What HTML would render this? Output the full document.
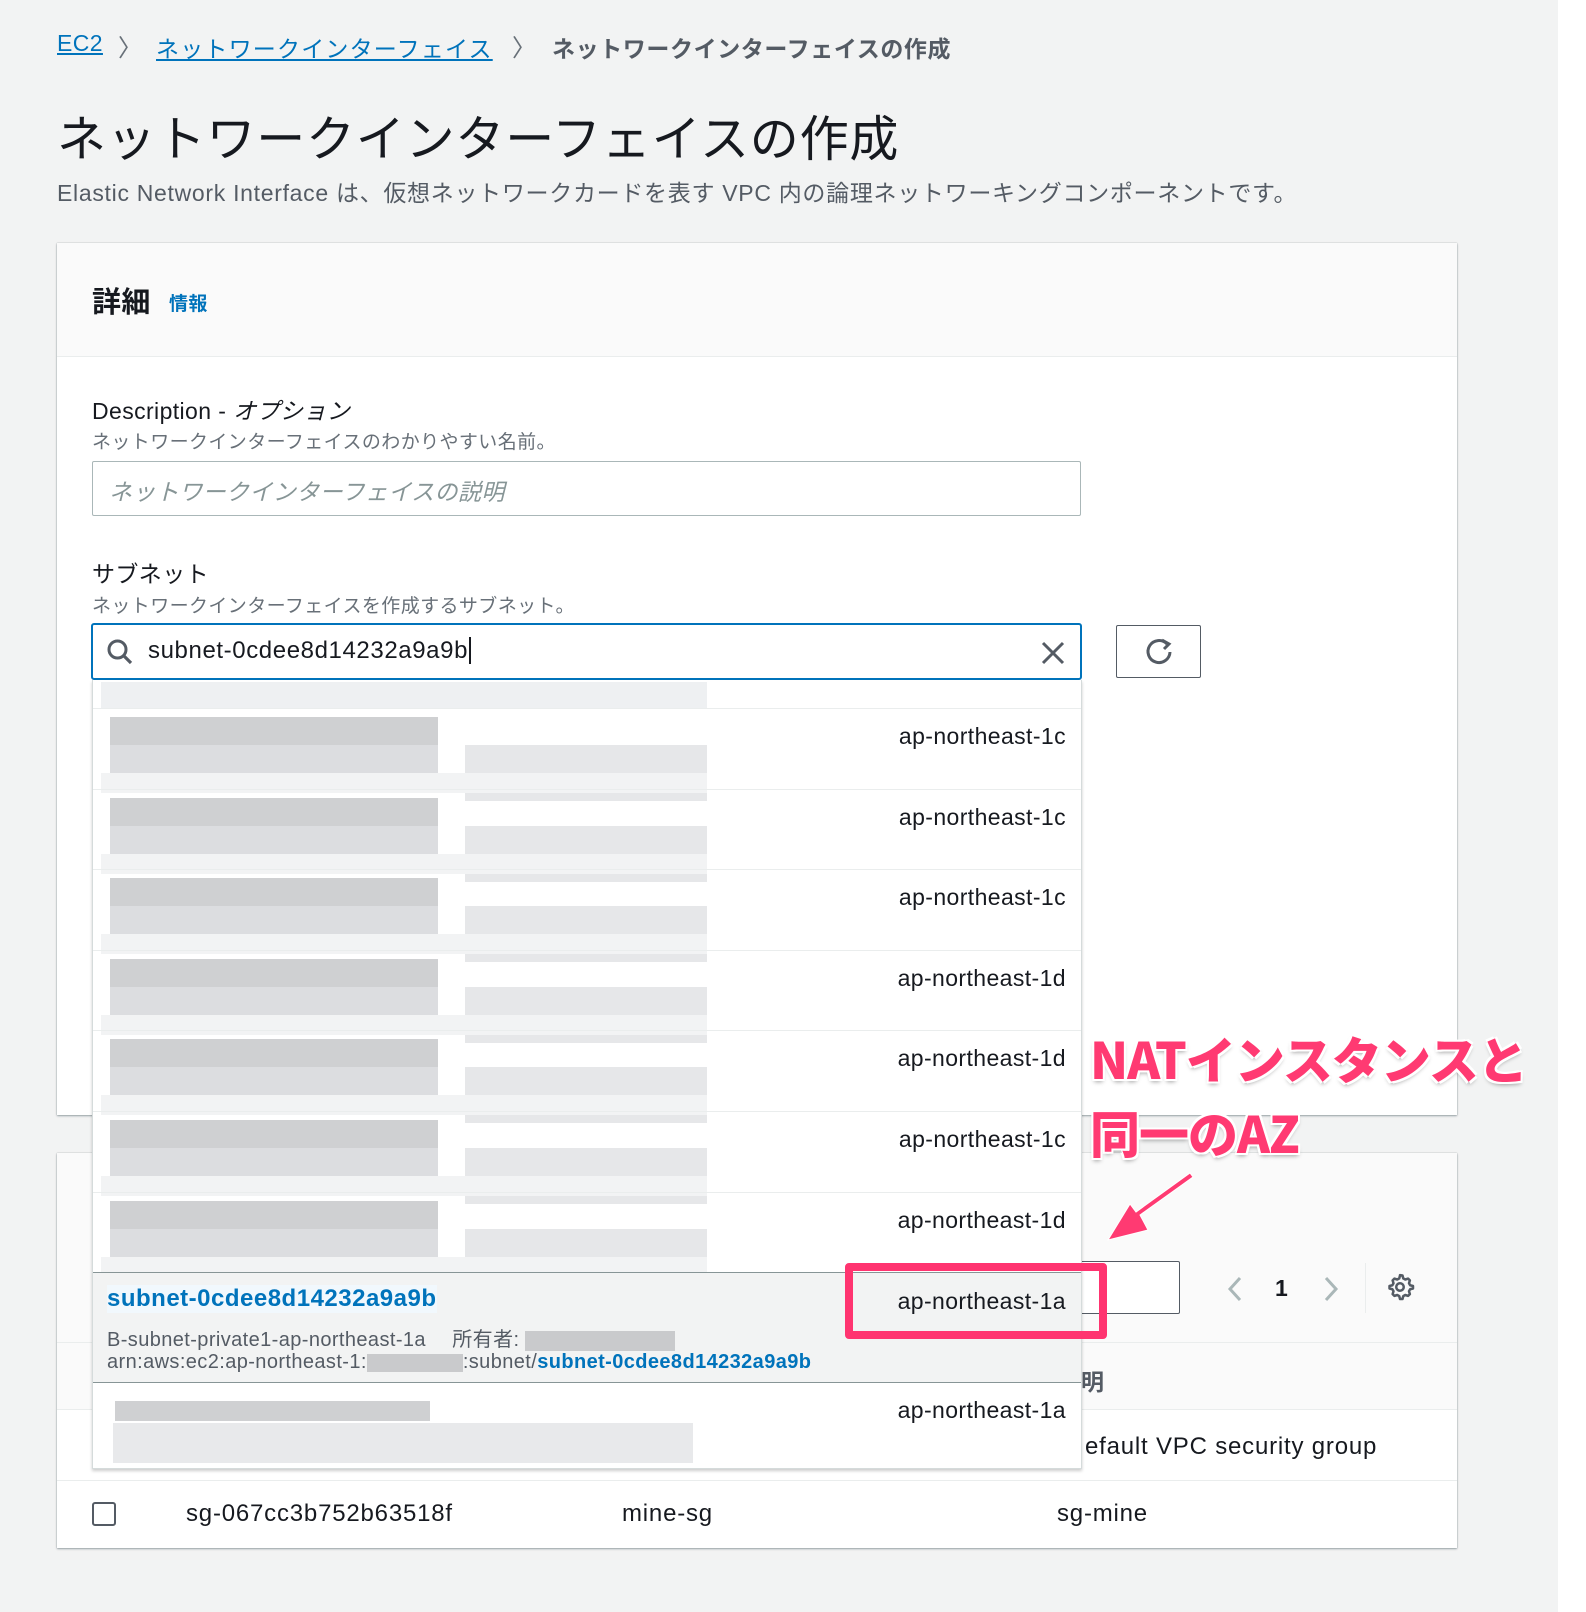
<!DOCTYPE html>
<html><head><meta charset="utf-8"><style>
*{margin:0;padding:0;box-sizing:border-box}
body{width:1586px;height:1612px;background:#fff;font-family:"Liberation Sans","Noto Sans CJK JP",sans-serif;color:#16191f;position:relative;overflow:hidden;letter-spacing:0.4px}
.bg{position:absolute;left:0;top:0;width:1558px;height:1612px;background:#f2f3f3}
.a{position:absolute;white-space:nowrap}
.panel{position:absolute;background:#fff;box-shadow:0 1px 2px rgba(0,28,36,.35),0 0 1px rgba(0,28,36,.3)}
.row{position:absolute;left:0;width:989px;height:81px;border-top:1px solid #eaeded}
.b1{position:absolute;left:17px;width:328px;height:28px;background:#cfd0d2}
.b2{position:absolute;left:17px;width:328px;height:28px;background:#dcdde0}
.b3{position:absolute;left:372px;width:242px;height:56px;background:#e6e7e9}
.b4{position:absolute;left:8px;width:606px;height:20px;background:#f2f3f4}
.az{position:absolute;right:16px;font-size:23px;color:#16191f}
.ann{position:absolute;font-family:"Noto Sans CJK JP",sans-serif;font-weight:900;color:#ff3a72;font-size:50px;text-shadow:2px 2px 0 #fff,-2px -2px 0 #fff,2px -2px 0 #fff,-2px 2px 0 #fff,0 3px 4px rgba(0,0,0,.35);white-space:nowrap;letter-spacing:-1px}
</style></head><body>
<div class="bg"></div>
<div class="a" style="left:57px;top:30px;font-size:23px;color:#0073bb;text-decoration:underline">EC2</div>
<div class="a" style="left:118px;top:28px;font-size:24px;color:#687078">〉</div>
<div class="a" style="left:156px;top:30px;font-size:23px;color:#0073bb;text-decoration:underline;letter-spacing:1.2px">ネットワークインターフェイス</div>
<div class="a" style="left:512px;top:28px;font-size:24px;color:#687078">〉</div>
<div class="a" style="left:552px;top:30px;font-size:23px;color:#545b64;font-weight:bold;letter-spacing:0.6px">ネットワークインターフェイスの作成</div>
<div class="a" style="left:57px;top:100px;font-size:49px;color:#16191f;letter-spacing:0.8px">ネットワークインターフェイスの作成</div>
<div class="a" style="left:57px;top:174px;font-size:23px;color:#545b64;letter-spacing:0.7px">Elastic Network Interface は、仮想ネットワークカードを表す VPC 内の論理ネットワーキングコンポーネントです。</div>

<div class="panel" style="left:57px;top:243px;width:1400px;height:872px">
 <div style="height:114px;background:#fafafa;border-bottom:1px solid #eaeded"></div>
 <div class="a" style="left:35px;top:36px;font-size:29px;font-weight:bold">詳細</div>
 <div class="a" style="left:112px;top:46px;font-size:19px;font-weight:bold;color:#0073bb">情報</div>
 <div class="a" style="left:35px;top:149px;font-size:23px">Description - <i>オプション</i></div>
 <div class="a" style="left:35px;top:184px;font-size:19px;color:#687078">ネットワークインターフェイスのわかりやすい名前。</div>
 <div style="position:absolute;left:35px;top:218px;width:989px;height:55px;border:1px solid #aab7b8;border-radius:2px"></div>
 <div class="a" style="left:52px;top:230px;font-size:23px;color:#879596;font-style:italic">ネットワークインターフェイスの説明</div>
 <div class="a" style="left:35px;top:312px;font-size:23px">サブネット</div>
 <div class="a" style="left:35px;top:348px;font-size:19px;color:#687078">ネットワークインターフェイスを作成するサブネット。</div>
 <div style="position:absolute;left:1059px;top:382px;width:85px;height:53px;border:1px solid #545b64;border-radius:2px"></div>
 <svg style="position:absolute;left:1086px;top:394px" width="32" height="30" viewBox="0 0 32 30"><path d="M24 7 A11 11 0 1 0 27 15" fill="none" stroke="#545b64" stroke-width="3"/><path d="M19 3 L26 7 L21 12" fill="none" stroke="#545b64" stroke-width="3"/></svg>
</div>

<div class="panel" style="left:57px;top:1153px;width:1400px;height:395px">
 <div style="height:190px;background:#fafafa;border-bottom:1px solid #eaeded"></div>
 <div style="position:absolute;top:190px;left:0;width:100%;height:67px;background:#fafafa;border-bottom:1px solid #eaeded"></div>
 <div style="position:absolute;top:327px;left:0;width:100%;border-top:1px solid #eaeded"></div>
 <div style="position:absolute;left:1000px;top:108px;width:123px;height:53px;border:1px solid #545b64;border-radius:2px;background:#fff"></div>
 <svg style="position:absolute;left:1168px;top:122px" width="20" height="28" viewBox="0 0 20 28"><path d="M15 3L5 14L15 25" fill="none" stroke="#aab7b8" stroke-width="3"/></svg>
 <div class="a" style="left:1218px;top:122px;font-size:23px;font-weight:bold">1</div>
 <svg style="position:absolute;left:1264px;top:122px" width="20" height="28" viewBox="0 0 20 28"><path d="M5 3L15 14L5 25" fill="none" stroke="#aab7b8" stroke-width="3"/></svg>
 <div style="position:absolute;left:1308px;top:110px;height:50px;border-left:1px solid #eaeded"></div>
 <svg style="position:absolute;left:1328px;top:119px" width="30" height="30" viewBox="0 0 24 24"><path d="M12 2.5l2 .3.6 2.3 1.6.9 2.3-.7 1.4 1.4-.7 2.3.9 1.6 2.3.6v2l-2.3.6-.9 1.6.7 2.3-1.4 1.4-2.3-.7-1.6.9-.6 2.3h-2l-.6-2.3-1.6-.9-2.3.7-1.4-1.4.7-2.3-.9-1.6-2.3-.6v-2l2.3-.6.9-1.6-.7-2.3 1.4-1.4 2.3.7 1.6-.9.6-2.3z" fill="none" stroke="#545b64" stroke-width="2" stroke-linejoin="round"/><circle cx="12" cy="12" r="3" fill="none" stroke="#545b64" stroke-width="2"/></svg>
 <div class="a" style="left:1024px;top:210px;font-size:23px;font-weight:bold;color:#545b64">明</div>
 <div class="a" style="left:1028px;top:280px;font-size:24px;letter-spacing:0.8px">efault VPC security group</div>
 <div style="position:absolute;left:35px;top:349px;width:24px;height:24px;border:2px solid #545b64;border-radius:3px"></div>
 <div class="a" style="left:129px;top:347px;font-size:24px;letter-spacing:0.8px">sg-067cc3b752b63518f</div>
 <div class="a" style="left:565px;top:347px;font-size:24px;letter-spacing:0.8px">mine-sg</div>
 <div class="a" style="left:1000px;top:347px;font-size:24px;letter-spacing:0.8px">sg-mine</div>
</div>

<!-- search input -->
<div style="position:absolute;left:91px;top:623px;width:991px;height:57px;border:2px solid #0073bb;border-radius:3px;background:#fff"></div>
<svg style="position:absolute;left:106px;top:638px" width="28" height="28" viewBox="0 0 28 28"><circle cx="11.5" cy="11.5" r="8.5" fill="none" stroke="#545b64" stroke-width="3"/><path d="M18 18l7 7" stroke="#545b64" stroke-width="3.2"/></svg>
<div class="a" style="left:148px;top:637px;font-size:24px;letter-spacing:0.6px">subnet-0cdee8d14232a9a9b<span style="border-left:2px solid #16191f;margin-left:1px"></span></div>
<svg style="position:absolute;left:1040px;top:640px" width="26" height="26" viewBox="0 0 26 26"><path d="M3 3L23 23M23 3L3 23" stroke="#545b64" stroke-width="3"/></svg>

<!-- dropdown -->
<div style="position:absolute;left:92px;top:680px;width:990px;height:789px;background:#fff;border:1px solid #d5dbdb;border-top:none;box-shadow:0 2px 3px rgba(0,0,0,.2);overflow:hidden">
 <div class="b4" style="top:2px;width:606px;height:26px;background:#eef0f2"></div>
 <div class="row" style="top:28px"><div class="b1" style="top:8px"></div><div class="b2" style="top:36px"></div><div class="b3" style="top:36px"></div><div class="b4" style="top:64px"></div><div class="az" style="top:14px">ap-northeast-1c</div></div>
 <div class="row" style="top:109px"><div class="b1" style="top:8px"></div><div class="b2" style="top:36px"></div><div class="b3" style="top:36px"></div><div class="b4" style="top:64px"></div><div class="az" style="top:14px">ap-northeast-1c</div></div>
 <div class="row" style="top:189px"><div class="b1" style="top:8px"></div><div class="b2" style="top:36px"></div><div class="b3" style="top:36px"></div><div class="b4" style="top:64px"></div><div class="az" style="top:14px">ap-northeast-1c</div></div>
 <div class="row" style="top:270px"><div class="b1" style="top:8px"></div><div class="b2" style="top:36px"></div><div class="b3" style="top:36px"></div><div class="b4" style="top:64px"></div><div class="az" style="top:14px">ap-northeast-1d</div></div>
 <div class="row" style="top:350px"><div class="b1" style="top:8px"></div><div class="b2" style="top:36px"></div><div class="b3" style="top:36px"></div><div class="b4" style="top:64px"></div><div class="az" style="top:14px">ap-northeast-1d</div></div>
 <div class="row" style="top:431px"><div class="b1" style="top:8px"></div><div class="b2" style="top:36px"></div><div class="b3" style="top:36px"></div><div class="b4" style="top:64px"></div><div class="az" style="top:14px">ap-northeast-1c</div></div>
 <div class="row" style="top:512px"><div class="b1" style="top:8px"></div><div class="b2" style="top:36px"></div><div class="b3" style="top:36px"></div><div class="b4" style="top:64px"></div><div class="az" style="top:14px">ap-northeast-1d</div></div>
 <div class="row" style="top:592px;height:111px;background:#f2f3f3;border:1px solid #879596;left:-1px;width:991px">
  <div class="a" style="left:14px;top:12px;font-size:24px;font-weight:bold;color:#0073bb;background:#f1f8fd;letter-spacing:0.5px">subnet-0cdee8d14232a9a9b</div>
  <div class="a" style="left:14px;top:50px;font-size:20px;color:#545b64">B-subnet-private1-ap-northeast-1a　 所有者: <span style="display:inline-block;width:150px;height:20px;background:#c9cacc;vertical-align:middle"></span></div>
  <div class="a" style="left:14px;top:78px;font-size:20px;color:#545b64">arn:aws:ec2:ap-northeast-1:<span style="display:inline-block;width:96px;height:18px;background:#c9cacc;vertical-align:middle"></span>:subnet/<b style="color:#0073bb">subnet-0cdee8d14232a9a9b</b></div>
  <div class="az" style="top:15px">ap-northeast-1a</div>
 </div>
 <div class="row" style="top:703px;height:86px;border:none"><div class="b1" style="top:18px;left:22px;width:315px;height:20px"></div><div class="b4" style="top:40px;left:20px;height:40px;width:580px;background:#e8e9eb"></div><div class="az" style="top:14px">ap-northeast-1a</div></div>
</div>

<!-- annotations -->
<div style="position:absolute;left:845px;top:1263px;width:262px;height:76px;border:8px solid #ff3470;border-radius:4px"></div>
<div class="ann" style="left:1090px;top:1022px">NATインスタンスと</div>
<div class="ann" style="left:1090px;top:1096px">同一のAZ</div>
<svg style="position:absolute;left:1100px;top:1170px" width="100" height="80" viewBox="0 0 100 80"><path d="M93 7 L40 45 L48 60 L8 70 L30 34 L36 42 L90 3 Z" fill="#ff3a72" stroke="#fff" stroke-width="1"/></svg>
</body></html>
